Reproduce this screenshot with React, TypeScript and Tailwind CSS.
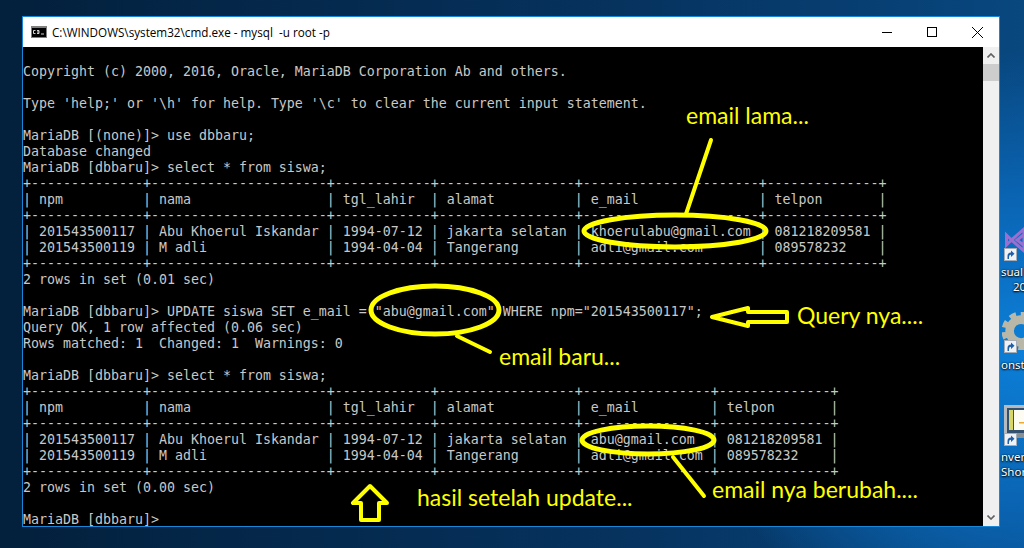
const EMAIL_LAMA = `+--------------+----------------------+------------+-----------------+----------------------+--------------+`
const BARU = `+--------------+----------------------+------------+-----------------+----------------+--------------+`

const lines = [
  '',
  'Copyright (c) 2000, 2016, Oracle, MariaDB Corporation Ab and others.',
  '',
  "Type 'help;' or '\\h' for help. Type '\\c' to clear the current input statement.",
  '',
  'MariaDB [(none)]> use dbbaru;',
  'Database changed',
  'MariaDB [dbbaru]> select * from siswa;',
  EMAIL_LAMA,
  '| npm          | nama                 | tgl_lahir  | alamat          | e_mail               | telpon       |',
  EMAIL_LAMA,
  '| 201543500117 | Abu Khoerul Iskandar | 1994-07-12 | jakarta selatan | khoerulabu@gmail.com | 081218209581 |',
  '| 201543500119 | M adli               | 1994-04-04 | Tangerang       | adli@gmail.com       | 089578232    |',
  EMAIL_LAMA,
  '2 rows in set (0.01 sec)',
  '',
  'MariaDB [dbbaru]> UPDATE siswa SET e_mail = "abu@gmail.com" WHERE npm="201543500117";',
  'Query OK, 1 row affected (0.06 sec)',
  'Rows matched: 1  Changed: 1  Warnings: 0',
  '',
  'MariaDB [dbbaru]> select * from siswa;',
  BARU,
  '| npm          | nama                 | tgl_lahir  | alamat          | e_mail         | telpon       |',
  BARU,
  '| 201543500117 | Abu Khoerul Iskandar | 1994-07-12 | jakarta selatan | abu@gmail.com  | 081218209581 |',
  '| 201543500119 | M adli               | 1994-04-04 | Tangerang       | adli@gmail.com | 089578232    |',
  BARU,
  '2 rows in set (0.00 sec)',
  '',
  'MariaDB [dbbaru]>',
]

const notes = [
  { text: 'email lama...', cls: 'left-[663px] top-[56px]' },
  { text: 'Query nya....', cls: 'left-[774px] top-[256px]' },
  { text: 'email baru...', cls: 'left-[476px] top-[297px]' },
  { text: 'hasil setelah update...', cls: 'left-[394px] top-[438px]' },
  { text: 'email nya berubah....', cls: 'left-[689px] top-[430px]' },
]

const iconLabel = "absolute left-[1001px] font-['Noto_Sans',sans-serif] text-[11.5px] leading-[15px] text-white [text-shadow:0_0_2px_#000,0_1px_2px_#000]"

function Shortcut({ className }: { className: string }) {
  return (
    <svg viewBox="0 0 13 13" className={`absolute h-[13px] w-[13px] ${className}`}>
      <rect x="0.5" y="0.5" width="12" height="12" fill="#eef2f6" stroke="#a4adb6" />
      <path d="M3.5 11V8q0-3.5 3.5-3.5V2.5l3.5 3.2L7 9V6.8Q5 6.8 5 9v2z" fill="#1f5fa8" />
    </svg>
  )
}

function DesktopIcons() {
  return (
    <>
      <svg viewBox="0 0 24 28" className="absolute left-[1005px] top-[226px] h-[28px] w-[24px]">
        <path d="M1.5 9l5 5-5 5zM6.5 14L19 3v22L6.5 14M19 8.5L12 14l7 5.5" fill="none" stroke="#9a6fd0" strokeWidth="3" />
      </svg>
      <Shortcut className="left-[1004px] top-[248px]" />
      <svg viewBox="0 0 40 40" className="absolute left-[1002px] top-[312px] h-[38px] w-[38px]">
        <circle cx="20" cy="20" r="12" fill="none" stroke="#b9b8a8" strokeWidth="9" />
        <circle cx="20" cy="20" r="18" fill="none" stroke="#b9b8a8" strokeWidth="5" strokeDasharray="7 5" />
      </svg>
      <Shortcut className="left-[1004px] top-[340px]" />
      <svg viewBox="0 0 24 36" className="absolute left-[1004px] top-[405px] h-[36px] w-[24px]">
        <rect x="0" y="0" width="24" height="32" fill="#b4bac0" />
        <rect x="3" y="3" width="21" height="25" fill="#33506e" />
        <rect x="5" y="5" width="4" height="20" fill="#d8d86a" />
        <rect x="10" y="5" width="14" height="20" fill="#fdfcf2" />
        <rect x="15" y="17" width="6" height="1.5" fill="#eba93a" />
        <rect x="8" y="28" width="16" height="5" fill="#8a8f94" />
      </svg>
      <Shortcut className="left-[1004px] top-[433px]" />
      <div className={`${iconLabel} top-[264px]`}>
        <div>sual</div>
        <div className="pl-[12px]">20</div>
      </div>
      <div className={`${iconLabel} top-[357px]`}>onst</div>
      <div className={`${iconLabel} top-[449px]`}>
        <div>nven</div>
        <div>Shor</div>
      </div>
    </>
  )
}

function Annotations() {
  return (
    <>
      <svg className="absolute left-0 top-0 h-full w-full" viewBox="0 0 960 479" fill="none" stroke="#ffff00">
        {/* window-local coordinates: page x-23, y-47 */}
        <ellipse cx="652" cy="184" rx="91" ry="16" strokeWidth="5" />
        <path d="M688 93L663 167" strokeWidth="4" strokeLinecap="round" />
        <ellipse cx="412" cy="263" rx="64" ry="24" strokeWidth="5" />
        <path d="M434 289L467 305" strokeWidth="4" strokeLinecap="round" />
        <path d="M689 270L725 261V265H764V275H725V279Z" strokeWidth="4" strokeLinejoin="round" />
        <ellipse cx="625" cy="393" rx="66" ry="14" strokeWidth="5" />
        <path d="M650 410L681 449" strokeWidth="4" strokeLinecap="round" />
        <path d="M347 439L330 456H338V473H356V456H364Z" strokeWidth="4" strokeLinejoin="round" />
      </svg>
      {notes.map((n) => (
        <span
          key={n.text}
          className={`absolute whitespace-nowrap font-['Lato',sans-serif] text-[23px] leading-6 text-[#ffff00] ${n.cls}`}
        >
          {n.text}
        </span>
      ))}
    </>
  )
}

function TitleBar() {
  return (
    <div className="flex h-[30px] items-center bg-white pl-[8px] text-black">
      <svg viewBox="0 0 16 12" className="h-[12px] w-[16px]">
        <rect width="16" height="12" fill="#808080" />
        <rect x="1" y="2" width="14" height="9" fill="#000" />
        <path d="M2.5 4.5h2M2.5 4.5v3h2M6 4.5h2v3H6M6 6h2M10 8h3" stroke="#e8e8e8" strokeWidth="0.9" fill="none" />
      </svg>
      <span className="ml-[5px] flex-1 whitespace-pre pt-px font-['Open_Sans',sans-serif] text-[11.7px]">
        {'C:\\WINDOWS\\system32\\cmd.exe - mysql  -u root -p'}
      </span>
      <div className="flex items-center gap-[35px] pr-[16px]">
        <span className="h-px w-[10px] bg-black" />
        <span className="h-[10px] w-[10px] border border-black" />
        <svg viewBox="0 0 11 11" className="h-[11px] w-[11px]" stroke="#000" strokeWidth="1">
          <path d="M0 0L11 11M11 0L0 11" />
        </svg>
      </div>
    </div>
  )
}

function Scrollbar() {
  return (
    <div className="flex w-[16px] flex-col items-center bg-[#f0f0f0]">
      <div className="flex h-[17px] items-center justify-center">
        <svg viewBox="0 0 8 5" className="h-[5px] w-[8px]" fill="none" stroke="#606060" strokeWidth="1.6">
          <path d="M0.5 4.5L4 1L7.5 4.5" />
        </svg>
      </div>
      <div className="h-[17px] w-full bg-[#cdcdcd]" />
      <div className="flex-1" />
      <div className="flex h-[17px] items-center justify-center">
        <svg viewBox="0 0 8 5" className="h-[5px] w-[8px]" fill="none" stroke="#606060" strokeWidth="1.6">
          <path d="M0.5 0.5L4 4L7.5 0.5" />
        </svg>
      </div>
    </div>
  )
}

export default function App() {
  return (
    <div className="relative h-[548px] w-[1024px] overflow-hidden bg-[radial-gradient(ellipse_340px_300px_at_1024px_350px,#0c7fd8_0%,#0a65b4_50%,transparent_100%),linear-gradient(90deg,#03203c_0%,#06325e_60%,#08477f_100%)]">
      <DesktopIcons />
      <div className="absolute left-[22px] top-[16px] flex h-[511px] w-[978px] flex-col border border-[#1a86d8]">
        <TitleBar />
        <div className="flex min-h-0 flex-1">
          <div className="relative flex-1 bg-black">
            <pre className="pt-px font-['DejaVu_Sans_Mono',monospace] text-[13.29px] leading-4 text-[#c8c8c8]">
              {lines.join('\n')}
            </pre>
            <Annotations />
          </div>
          <Scrollbar />
        </div>
      </div>
    </div>
  )
}
